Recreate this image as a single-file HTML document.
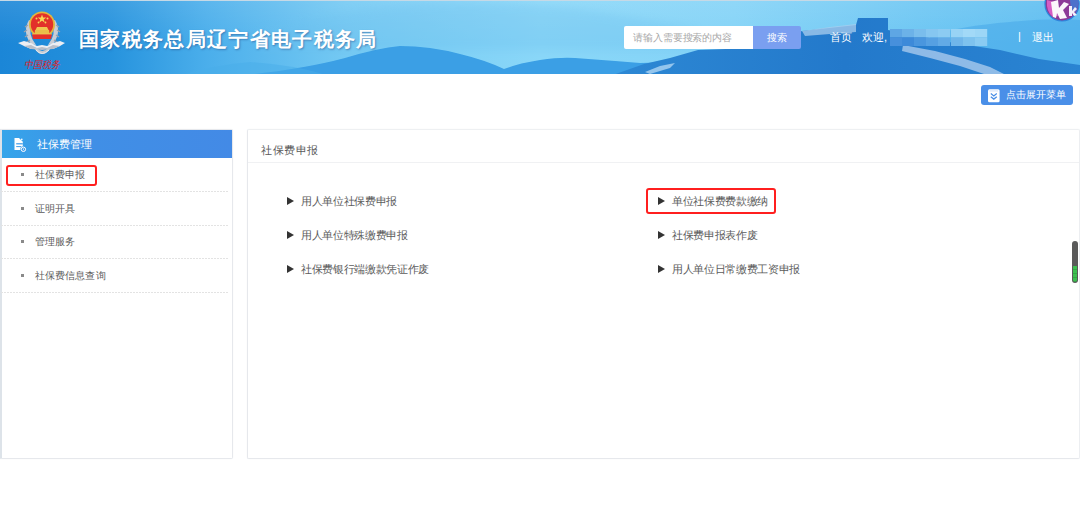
<!DOCTYPE html>
<html><head><meta charset="utf-8">
<style>
*{margin:0;padding:0;box-sizing:border-box}
html,body{width:1080px;height:507px;overflow:hidden;background:#fff;font-family:"Liberation Sans",sans-serif}
.abs{position:absolute}
#hdr{position:absolute;left:0;top:0;width:1080px;height:74px;overflow:hidden}
#title{position:absolute;left:79px;top:26px;font-size:20px;font-weight:900;color:#fff;letter-spacing:1.34px;white-space:nowrap;text-shadow:1px 1px 2px rgba(40,80,140,.55)}
#search{position:absolute;left:624px;top:26px;width:130px;height:23px;background:#fff;border-radius:2px 0 0 2px}
#search span{position:absolute;left:9px;top:5px;font-size:10px;color:#a8a8a8;white-space:nowrap;letter-spacing:-0.1px}
#sbtn{position:absolute;left:753px;top:26px;width:48px;height:23px;background:#7a9ff0;border-radius:0 2px 2px 0}
#sbtn span{position:absolute;left:14px;top:5px;font-size:10px;color:#fff}
.htxt{position:absolute;top:29.5px;font-size:11px;color:#fff;white-space:nowrap}
#expbtn{position:absolute;left:981px;top:85px;width:92px;height:19.5px;background:#4a8fe8;border-radius:3px}
#expbtn span{position:absolute;left:25px;top:3px;font-size:10px;color:#fff;white-space:nowrap}
#lp{position:absolute;left:0;top:129px;width:233px;height:330px;border:1px solid #e6e8ec;border-left:2px solid #dde3e9;border-radius:0 2px 2px 0;box-shadow:0 0 1px #e6e8ec}
#lph{position:absolute;left:2px;top:130px;width:230px;height:28px;background:linear-gradient(90deg,#35a5ea 0%,#408fe6 40%,#438ae6 100%)}
#lph span{position:absolute;left:35px;top:7px;font-size:11px;color:#fff;white-space:nowrap}
.li{position:absolute;left:0;width:228px;height:34px}
.li:after{content:"";position:absolute;left:1px;right:0;bottom:0;height:1px;background:repeating-linear-gradient(90deg,#e3e3e3 0 2px,transparent 2px 3px)}
.li .dot{position:absolute;left:21px;width:3px;height:3px;background:#8a8a8a}
.li span{position:absolute;left:35px;font-size:10px;letter-spacing:0.1px;color:#5a5a5a;white-space:nowrap}
#mp{position:absolute;left:247px;top:129px;width:833px;height:330px;border:1px solid #e6e8ec;border-top-color:#eef0f2;border-right-color:#eceef1;border-radius:2px;box-shadow:0 0 1px #e6e8ec}
#mpt{position:absolute;left:261px;top:143px;font-size:11px;letter-spacing:0.6px;color:#5a5a5a;white-space:nowrap}
#mpl{position:absolute;left:248px;top:162px;width:831px;height:1px;background:#f0f1f3}
.lk{position:absolute;font-size:11px;letter-spacing:-0.35px;color:#5c5c5c;white-space:nowrap}
.tri{position:absolute;width:0;height:0;border-left:7px solid #333;border-top:4px solid transparent;border-bottom:4px solid transparent}
.redbox{position:absolute;border:2px solid #ff1f1f;border-radius:3px}
#sb{position:absolute;left:1072px;top:241px;width:6px;height:42px;background:#5a5a5a;border-radius:3px;overflow:hidden}
</style></head><body>
<div id="hdr">
<svg width="1080" height="74" viewBox="0 0 1080 74" style="position:absolute;left:0;top:0">
<defs>
<linearGradient id="sky" x1="0" y1="0" x2="1" y2="0">
<stop offset="0" stop-color="#1b86d7"/>
<stop offset="0.1" stop-color="#2592dd"/>
<stop offset="0.19" stop-color="#4aaeeb"/>
<stop offset="0.32" stop-color="#74c9f3"/>
<stop offset="0.5" stop-color="#8ad7f8"/>
<stop offset="0.68" stop-color="#84d3f7"/>
<stop offset="0.85" stop-color="#6cc6f3"/>
<stop offset="1" stop-color="#5cbcf0"/>
</linearGradient>
<linearGradient id="skyv" x1="0" y1="0" x2="0" y2="1">
<stop offset="0" stop-color="#ffffff" stop-opacity="0.10"/>
<stop offset="0.6" stop-color="#ffffff" stop-opacity="0"/>
</linearGradient>
<linearGradient id="mtn" x1="0" y1="0" x2="1" y2="0">
<stop offset="0" stop-color="#2d88d4"/>
<stop offset="0.5" stop-color="#2379cb"/>
<stop offset="1" stop-color="#2a84d2"/>
</linearGradient>
<filter id="bl3" x="-10%" y="-50%" width="120%" height="200%"><feGaussianBlur stdDeviation="4"/></filter>
<filter id="bl1"><feGaussianBlur stdDeviation="0.7"/></filter>
</defs>
<rect width="1080" height="74" fill="url(#sky)"/>
<rect width="1080" height="74" fill="url(#skyv)"/>
<path d="M260 30 Q340 10 420 4 Q520 0 600 12 Q650 20 700 30 L700 50 L260 50Z" fill="#6cc0ee" opacity="0.3" filter="url(#bl3)"/>
<path d="M930 36 Q960 26 1010 22 Q1050 18 1080 20 L1080 74 L930 74Z" fill="#4aaaea" opacity="0.6"/>
<path d="M235 76 Q300 70 345 58 Q378 48 400 46 Q430 46 460 54 Q485 60 504 69 Q520 63 540 60 Q560 57 575 58 L615 61 L640 63 L680 62 L720 76Z" fill="#3a9fe5" filter="url(#bl1)"/>
<path d="M180 76 Q215 64 250 62 Q290 64 330 76Z" fill="#4aaeea" opacity="0.5" filter="url(#bl1)"/>
<path d="M610 76 L644 64 L670 58 L698 50 L753 48 L802 31 L856 25 L858 18 L888 18 L888 30 L920 36 L954 43 L1000 50 L1039 59 L1080 65 L1080 74Z" fill="url(#mtn)"/>
<path d="M802 31 L830 27 L856 24 L856 32 L830 34 L805 36Z" fill="#a9cdee" opacity="0.75"/>
<path d="M903 45 L935 51 L965 59 L990 67 L1004 74 L984 74 L960 66 L930 58 L902 51Z" fill="#a8caee" opacity="0.8" filter="url(#bl1)"/>
<path d="M645 72 L660 66 L675 63 L670 68 L650 74Z" fill="#c0e0f8" opacity="0.7"/>
<rect width="1080" height="1" fill="#c6d9e6"/>
<path d="M29 20 Q22 32 31 44 L36 45 Q27 34 32 21Z" fill="#c9cdd5"/>
<path d="M55 20 Q62 32 53 44 L48 45 Q57 34 52 21Z" fill="#c9cdd5"/>
<path d="M28 25 L25 27 M27 30 L24 32 M28 35 L25 37 M30 40 L27 42 M56 25 L59 27 M57 30 L60 32 M56 35 L59 37 M54 40 L57 42" stroke="#9aa0aa" stroke-width="1.4"/>
<circle cx="42" cy="24.5" r="13" fill="#e3b53c"/>
<circle cx="42" cy="24.5" r="11.2" fill="#e2302a"/>
<path d="M42 14.5 L43.1 17.6 L46.3 17.6 L43.7 19.5 L44.7 22.5 L42 20.7 L39.3 22.5 L40.3 19.5 L37.7 17.6 L40.9 17.6Z" fill="#f6d656"/>
<circle cx="36.5" cy="18.5" r="1" fill="#f6d656"/><circle cx="47.5" cy="18.5" r="1" fill="#f6d656"/>
<circle cx="38.5" cy="22.5" r="0.9" fill="#f6d656"/><circle cx="45.5" cy="22.5" r="0.9" fill="#f6d656"/>
<path d="M37 27 L47 27 L48.5 30 L35.5 30Z" fill="#f0c650"/>
<path d="M35 30 L49 30 L49.5 34 L34.5 34Z" fill="#e9bd48"/>
<path d="M32 34 L52 34 L51 39 L33 39Z" fill="#e3302a"/>
<path d="M32 34 L52 34" stroke="#f0c650" stroke-width="0.8"/>
<path d="M18 43 L24 41 L31 43 L37 46 L42 45 L47 46 L53 43 L60 41 L65 43 L60 46 L53 49 L42 49 L31 49 L24 46Z" fill="#eceef3"/>
<path d="M24 46 L31 45 L37 48 L42 47 L47 48 L53 45 L60 46 L53 49 L42 50 L31 49Z" fill="#b9bec8"/>
<path d="M34 48 Q42 60 51 48 L48 48 Q42 54 37 48Z" fill="#c3c8d0"/>
<path d="M36 50 Q42 57 49 50" stroke="#e8ebf0" stroke-width="1" fill="none"/>
<text x="24" y="68" font-size="10" fill="#e01a1a" font-family="Liberation Serif,serif" font-style="italic" textLength="36" lengthAdjust="spacingAndGlyphs">中国税务</text>
</svg>
</div>
<div id="title">国家税务总局辽宁省电子税务局</div>
<div id="search"><span>请输入需要搜索的内容</span></div>
<div id="sbtn"><span>搜索</span></div>
<div class="htxt" style="left:830px">首页</div>
<div class="htxt" style="left:862px">欢迎,</div>
<svg class="abs" style="left:890px;top:29px" width="98" height="17"><rect x="0" y="0" width="12.2" height="8.5" fill="#5ea6e4"/><rect x="0" y="8.5" width="12.2" height="8.5" fill="#4790dc"/><rect x="12" y="0" width="12.2" height="8.5" fill="#6cb2e8"/><rect x="12" y="8.5" width="12.2" height="8.5" fill="#3d8ad9"/><rect x="24" y="0" width="12.2" height="8.5" fill="#7abdec"/><rect x="24" y="8.5" width="12.2" height="8.5" fill="#4a96de"/><rect x="36" y="0" width="12.2" height="8.5" fill="#86c6f0"/><rect x="36" y="8.5" width="12.2" height="8.5" fill="#56a0e2"/><rect x="48" y="0" width="12.2" height="8.5" fill="#8ccbf2"/><rect x="48" y="8.5" width="12.2" height="8.5" fill="#62aae6"/><rect x="61" y="0" width="12.2" height="8.5" fill="#98d3f5"/><rect x="61" y="8.5" width="12.2" height="8.5" fill="#70b6ea"/><rect x="73" y="0" width="12.2" height="8.5" fill="#a2d9f7"/><rect x="73" y="8.5" width="12.2" height="8.5" fill="#7ec2ee"/><rect x="85" y="0" width="12.2" height="8.5" fill="#9cd6f6"/><rect x="85" y="8.5" width="12.2" height="8.5" fill="#8acbf2"/></svg>
<div class="htxt" style="left:1018px">|</div>
<div class="htxt" style="left:1032px">退出</div>
<svg class="abs" style="left:1044px;top:-14.5px" width="36" height="36" viewBox="0 0 36 36">
<circle cx="18" cy="18" r="17" fill="#8c3a98" stroke="#2d86dc" stroke-width="1.2"/>
<path d="M3 14 Q2 26 9 31 L14 30 L10 16Z" fill="#d65cc4"/>
<path d="M26 14 L34 12 Q35 20 32 26 L27 24Z" fill="#3d7fd8" opacity="0.8"/>
<path d="M7 16 L14 14 L15 22 L20 16 L25 18 L19 24 L23 32 L16 33 L13 27 L12 32 L9 31Z" fill="#fbf6fb"/>
<path d="M25 20 L28 20 L28 25 L31 21 L33 23 L30 26 L33 29 L30 30 L28 27 L28 30 L25 30Z" fill="#f4f0fa"/>
</svg>

<div id="expbtn">
<svg class="abs" style="left:7px;top:3.5px" width="12" height="14" viewBox="0 0 12 14">
<rect x="0" y="0.3" width="11.6" height="13" rx="1.5" fill="#fff"/>
<rect x="1.5" y="1.6" width="8.6" height="0.7" fill="#b9d2f4"/>
<path d="M2.8 4.6 L5.8 6.9 L8.8 4.6 M2.8 7.8 L5.8 10.1 L8.8 7.8" stroke="#4a8fe6" stroke-width="1.3" fill="none"/>
</svg>
<span>点击展开菜单</span></div>

<div id="lp"></div>
<div id="lph">
<svg class="abs" style="left:11px;top:8px" width="14" height="15" viewBox="0 0 14 15">
<path d="M1.5 0 H6 L9.8 3.8 V12 H1.5Z" fill="#fff"/>
<circle cx="8.8" cy="1.4" r="0.8" fill="#fff"/>
<rect x="3.2" y="5.2" width="6.6" height="1.2" fill="#3d9be8"/>
<rect x="3.2" y="8.1" width="5" height="1" fill="#3d9be8"/>
<circle cx="10.4" cy="11.3" r="3.1" fill="#3d9be8"/>
<circle cx="10.4" cy="11.3" r="2.2" fill="none" stroke="#fff" stroke-width="1"/>
<path d="M9.7 10.4 L10.4 12.6 L11.1 10.4Z" fill="#fff"/>
</svg>
<span>社保费管理</span></div>
<div class="li" style="top:158px"><div class="dot" style="top:15px"></div><span style="top:10px">社保费申报</span></div>
<div class="li" style="top:192px"><div class="dot" style="top:15px"></div><span style="top:10px">证明开具</span></div>
<div class="li" style="top:225px"><div class="dot" style="top:15px"></div><span style="top:10px">管理服务</span></div>
<div class="li" style="top:259px"><div class="dot" style="top:15px"></div><span style="top:10px">社保费信息查询</span></div>
<div class="redbox" style="left:6px;top:165px;width:91px;height:21px"></div>

<div id="mp"></div>
<div id="mpt">社保费申报</div>
<div id="mpl"></div>
<div class="tri" style="left:287px;top:197px"></div><div class="lk" style="left:301px;top:194px">用人单位社保费申报</div>
<div class="tri" style="left:287px;top:231px"></div><div class="lk" style="left:301px;top:228px">用人单位特殊缴费申报</div>
<div class="tri" style="left:287px;top:265px"></div><div class="lk" style="left:301px;top:262px">社保费银行端缴款凭证作废</div>
<div class="tri" style="left:658px;top:197px"></div><div class="lk" style="left:672px;top:194px">单位社保费费款缴纳</div>
<div class="tri" style="left:658px;top:231px"></div><div class="lk" style="left:672px;top:228px">社保费申报表作废</div>
<div class="tri" style="left:658px;top:265px"></div><div class="lk" style="left:672px;top:262px">用人单位日常缴费工资申报</div>
<div class="redbox" style="left:646px;top:188px;width:130px;height:26px"></div>
<div id="sb"><div style="position:absolute;left:1px;top:25px;width:4px;height:16px;border-radius:0 0 2px 2px;background:repeating-linear-gradient(180deg,#3dbf4f 0 3px,#33a845 3px 4px)"></div></div>
</body></html>
